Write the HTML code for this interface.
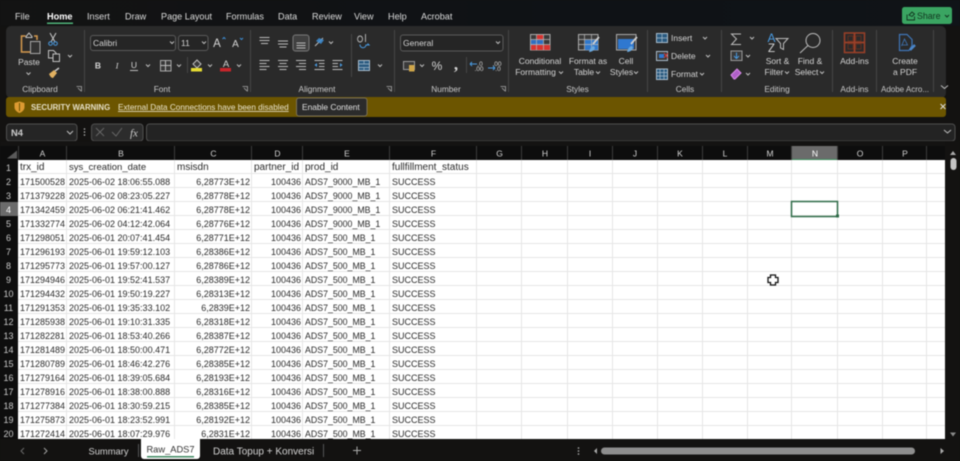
<!DOCTYPE html>
<html><head><meta charset="utf-8"><style>
html,body{margin:0;padding:0;width:960px;height:461px;overflow:hidden;background:#131211}
body{position:relative;font-family:"Liberation Sans",sans-serif}
#wrap{position:absolute;left:0;top:0;width:960px;height:461px;filter:blur(.4px)}
svg{position:absolute;left:0;top:0}
svg text{font-family:"Liberation Sans",sans-serif;font-size:8.5px;fill:#d4d4d4}
.m{text-anchor:middle}
.l{fill:#c8c8c8;font-size:8.3px}
.t{font-size:9.1px;fill:#dcdcdc}
.c{fill:none;stroke:#bdbdbd;stroke-width:1}
.s{fill:none;stroke:#bcbcbc;stroke-width:1}
.b{fill:none;stroke:#3f8fd6;stroke-width:1}
#grid{position:absolute;left:0;top:160px;width:945px;height:279px;overflow:hidden;background:#fff}
table{position:absolute;left:0;top:0;border-collapse:collapse;table-layout:fixed;width:477px;font-size:9px;color:#2a2a2a}
td{height:14px;padding:2px 2px 0;box-sizing:border-box;white-space:nowrap;overflow:hidden;line-height:12px}
td:first-child{background:#0e0e0e;color:#c9c9c9;text-align:center;padding:2px 1px 0 0;font-size:9px}
td.r{text-align:right}
td.e{font-size:8.8px}
tr.h td{font-size:10px}
tr.h td:first-child{font-size:9px}
tr.h td.ss{font-size:9.5px}
tr.sel td:first-child{background:#6b6b6b;color:#fff}
</style></head><body><div id="wrap">
<div id="grid">
<svg width="945" height="279" style="left:0;top:0">
<g stroke="#e6e6e6" stroke-width="1">
<path d="M18 13.5H945M18 27.5H945M18 41.5H945M18 55.5H945M18 69.5H945M18 83.5H945M18 97.5H945M18 111.5H945M18 125.5H945M18 139.5H945M18 153.5H945M18 167.5H945M18 181.5H945M18 195.5H945M18 209.5H945M18 223.5H945M18 237.5H945M18 251.5H945M18 265.5H945"/>
<path d="M66.500 0V279M174.500 0V279M251.500 0V279M302.500 0V279M389.500 0V279M476.500 0V279M521.500 0V279M567.500 0V279M612.500 0V279M657.500 0V279M702.500 0V279M747.500 0V279M791.500 0V279M837.500 0V279M882.500 0V279M926.500 0V279"/>
</g>
<rect x="791.500" y="41.500" width="46" height="15" fill="none" stroke="#2e6b47" stroke-width="1.500"/>
<rect x="836" y="54.500" width="3" height="3" fill="#2e6b47"/>
<path d="M770.500 115h5v2.500h2.500v5h-2.500v2.500h-5v-2.500h-2.500v-5h2.500z" fill="#fff" stroke="#111" stroke-width="1.300"/>
</svg>
<table>
<colgroup><col style="width:18px"><col style="width:49px"><col style="width:108px"><col style="width:77px"><col style="width:51px"><col style="width:87px"><col style="width:87px"></colgroup>
<tr class="h"><td>1</td><td>trx_id</td><td class="ss">sys_creation_date</td><td>msisdn</td><td>partner_id</td><td>prod_id</td><td>fullfillment_status</td></tr>
<tr><td>2</td><td class="r">171500528</td><td>2025-06-02 18:06:55.088</td><td class="r">6,28773E+12</td><td class="r">100436</td><td class="e">ADS7_9000_MB_1</td><td>SUCCESS</td></tr>
<tr><td>3</td><td class="r">171379228</td><td>2025-06-02 08:23:05.227</td><td class="r">6,28778E+12</td><td class="r">100436</td><td class="e">ADS7_9000_MB_1</td><td>SUCCESS</td></tr>
<tr class="sel"><td>4</td><td class="r">171342459</td><td>2025-06-02 06:21:41.462</td><td class="r">6,28778E+12</td><td class="r">100436</td><td class="e">ADS7_9000_MB_1</td><td>SUCCESS</td></tr>
<tr><td>5</td><td class="r">171332774</td><td>2025-06-02 04:12:42.064</td><td class="r">6,28776E+12</td><td class="r">100436</td><td class="e">ADS7_9000_MB_1</td><td>SUCCESS</td></tr>
<tr><td>6</td><td class="r">171298051</td><td>2025-06-01 20:07:41.454</td><td class="r">6,28771E+12</td><td class="r">100436</td><td class="e">ADS7_500_MB_1</td><td>SUCCESS</td></tr>
<tr><td>7</td><td class="r">171296193</td><td>2025-06-01 19:59:12.103</td><td class="r">6,28386E+12</td><td class="r">100436</td><td class="e">ADS7_500_MB_1</td><td>SUCCESS</td></tr>
<tr><td>8</td><td class="r">171295773</td><td>2025-06-01 19:57:00.127</td><td class="r">6,28786E+12</td><td class="r">100436</td><td class="e">ADS7_500_MB_1</td><td>SUCCESS</td></tr>
<tr><td>9</td><td class="r">171294946</td><td>2025-06-01 19:52:41.537</td><td class="r">6,28389E+12</td><td class="r">100436</td><td class="e">ADS7_500_MB_1</td><td>SUCCESS</td></tr>
<tr><td>10</td><td class="r">171294432</td><td>2025-06-01 19:50:19.227</td><td class="r">6,28313E+12</td><td class="r">100436</td><td class="e">ADS7_500_MB_1</td><td>SUCCESS</td></tr>
<tr><td>11</td><td class="r">171291353</td><td>2025-06-01 19:35:33.102</td><td class="r">6,2839E+12</td><td class="r">100436</td><td class="e">ADS7_500_MB_1</td><td>SUCCESS</td></tr>
<tr><td>12</td><td class="r">171285938</td><td>2025-06-01 19:10:31.335</td><td class="r">6,28318E+12</td><td class="r">100436</td><td class="e">ADS7_500_MB_1</td><td>SUCCESS</td></tr>
<tr><td>13</td><td class="r">171282281</td><td>2025-06-01 18:53:40.266</td><td class="r">6,28387E+12</td><td class="r">100436</td><td class="e">ADS7_500_MB_1</td><td>SUCCESS</td></tr>
<tr><td>14</td><td class="r">171281489</td><td>2025-06-01 18:50:00.471</td><td class="r">6,28772E+12</td><td class="r">100436</td><td class="e">ADS7_500_MB_1</td><td>SUCCESS</td></tr>
<tr><td>15</td><td class="r">171280789</td><td>2025-06-01 18:46:42.276</td><td class="r">6,28385E+12</td><td class="r">100436</td><td class="e">ADS7_500_MB_1</td><td>SUCCESS</td></tr>
<tr><td>16</td><td class="r">171279164</td><td>2025-06-01 18:39:05.684</td><td class="r">6,28193E+12</td><td class="r">100436</td><td class="e">ADS7_500_MB_1</td><td>SUCCESS</td></tr>
<tr><td>17</td><td class="r">171278916</td><td>2025-06-01 18:38:00.888</td><td class="r">6,28316E+12</td><td class="r">100436</td><td class="e">ADS7_500_MB_1</td><td>SUCCESS</td></tr>
<tr><td>18</td><td class="r">171277384</td><td>2025-06-01 18:30:59.215</td><td class="r">6,28385E+12</td><td class="r">100436</td><td class="e">ADS7_500_MB_1</td><td>SUCCESS</td></tr>
<tr><td>19</td><td class="r">171275873</td><td>2025-06-01 18:23:52.991</td><td class="r">6,28192E+12</td><td class="r">100436</td><td class="e">ADS7_500_MB_1</td><td>SUCCESS</td></tr>
<tr><td>20</td><td class="r">171272414</td><td>2025-06-01 18:07:29.976</td><td class="r">6,2831E+12</td><td class="r">100436</td><td class="e">ADS7_500_MB_1</td><td>SUCCESS</td></tr>
</table>
</div>
<svg width="960" height="461" viewBox="0 0 960 461" style="pointer-events:none">
<defs><linearGradient id="top" x1="0" x2="1" y1="0" y2="0"><stop offset="0" stop-color="#131313"/><stop offset=".6" stop-color="#0f1216"/><stop offset="1" stop-color="#101418"/></linearGradient></defs>
<rect width="960" height="26" fill="url(#top)"/>
<!-- tabs -->
<g class="tabs">
<text x="15" y="19.500" class="t">File</text>
<text x="47" y="19.500" class="t" style="fill:#fff;font-weight:bold;font-size:9.200px">Home</text>
<rect x="47" y="22.500" width="26" height="1.500" fill="#4fb37a"/>
<text x="87" y="19.500" class="t">Insert</text>
<text x="125" y="19.500" class="t">Draw</text>
<text x="161" y="19.500" class="t">Page Layout</text>
<text x="226" y="19.500" class="t">Formulas</text>
<text x="278" y="19.500" class="t">Data</text>
<text x="312" y="19.500" class="t">Review</text>
<text x="354" y="19.500" class="t">View</text>
<text x="388" y="19.500" class="t">Help</text>
<text x="421" y="19.500" class="t">Acrobat</text>
</g>
<!-- share -->
<rect x="902" y="7" width="50" height="17" rx="2.500" fill="#3aa562"/>
<path d="M907 14.500v5.500h7.500v-3.500M909 15l3-3 2.500 2-2.500 2.500z" fill="none" stroke="#12351f" stroke-width=".9"/>
<text x="917" y="19" style="fill:#12351f;font-size:8.800px">Share</text>
<path d="M945 15l2 2 2-2" fill="none" stroke="#12351f"/>
<!-- ribbon -->
<rect x="6" y="26" width="940" height="72" rx="5" fill="#2a2a2a"/>
<g stroke="#454545" stroke-width="1">
<path d="M84.500 30V92M250.500 30V92M394.500 30V92M508.500 30V92M647.500 30V92M721.500 30V92M832.500 30V92M876.500 30V92M933.500 30V92"/>
<path d="M351.500 34V77M466.500 57V73M187.500 57V73"/>
</g>
<!-- clipboard -->
<path d="M25.500 36h-4v16h9" fill="none" stroke="#d69a4e" stroke-width="1.500"/><path d="M34 36h3v4" fill="none" stroke="#d69a4e" stroke-width="1.500"/>
<path d="M26 36.500l3-3.500 3 3.500v1h-6z" fill="#2a2a2a" stroke="#c8c8c8"/>
<rect x="30.500" y="41.500" width="9.500" height="12" fill="#333" stroke="#a8a8a8"/>
<text x="29" y="65" class="m">Paste</text>
<path d="M26.500 72.500l2 2 2-2" class="c"/>
<path d="M50 33l5 9M56 33l-5 9" stroke="#c8c8c8" fill="none"/><circle cx="50.500" cy="43.500" r="1.800" fill="#2a2a2a" stroke="#4a9ae0"/><circle cx="55.500" cy="43.500" r="1.800" fill="#2a2a2a" stroke="#4a9ae0"/>
<path d="M48.500 50.500h5l2.500 2.500v1h-3v4h-4.500z" fill="none" stroke="#c0c0c0"/><rect x="53" y="54" width="6.500" height="7.500" fill="#2a2a2a" stroke="#c0c0c0"/>
<path d="M68 55l2 2 2-2" class="c"/>
<path d="M49 74l5-4 3 3-4 5c-2 0-3-2-4-4z" fill="#e0b060"/><path d="M55 71l4-3" stroke="#c8c8c8" stroke-width="1.500"/>
<text x="40" y="92" class="m l">Clipboard</text>
<path d="M76.500 86.500h5v5M78 88l3 3" fill="none" stroke="#aaa" stroke-width=".8"/>
<!-- font -->
<rect x="90.500" y="35.500" width="85" height="15" rx="2.500" fill="#252525" stroke="#5a5a5a"/>
<text x="93" y="46">Calibri</text><path d="M170 41.500l2 2 2-2" class="c"/>
<rect x="178.500" y="35.500" width="29.500" height="15" rx="2.500" fill="#252525" stroke="#5a5a5a"/>
<text x="181" y="46">11</text><path d="M202 41.500l2 2 2-2" class="c"/>
<text x="217" y="47" class="m" style="font-size:11.500px">A</text><path d="M222.500 39l1.500-1.500 1.500 1.500" class="b"/>
<text x="235.500" y="47" class="m" style="font-size:10px">A</text><path d="M240 38l1.500 1.500 1.500-1.500" class="b"/>
<text x="98" y="68.500" class="m" style="font-weight:bold">B</text>
<text x="117" y="68.500" class="m" style="font-style:italic;font-family:'Liberation Serif',serif">I</text>
<text x="134" y="68" class="m">U</text><path d="M130 70.500h8" class="s"/>
<path d="M146 64.500l2 2 2-2" class="c"/>
<rect x="160.500" y="60.500" width="10.500" height="10.500" fill="#383838" stroke="#a8a8a8"/><path d="M165.500 60.500v10.500M160.500 65.500h10.500" class="s"/>
<path d="M177 64.500l2 2 2-2" class="c"/>
<path d="M193 64l4-4 4 4-3.500 3.500h-1z" fill="#3a3a3a" stroke="#c0c0c0"/>
<rect x="191" y="68" width="11" height="3.500" fill="#e6dc32"/>
<path d="M208 64.500l2 2 2-2" class="c"/>
<text x="226" y="67" class="m" style="font-size:9.500px">A</text><rect x="220" y="68" width="11" height="3.500" fill="#c9252b"/>
<path d="M237 64.500l2 2 2-2" class="c"/>
<text x="162" y="92" class="m l">Font</text>
<path d="M242.500 86.500h5v5M244 88l3 3" fill="none" stroke="#aaa" stroke-width=".8"/>
<!-- alignment -->
<path d="M259.500 37.500h10M259.500 40.500h10M261 43.500h7" class="s"/>
<path d="M278 41h10M278 44h10M279.500 47h7" class="s"/>
<rect x="293" y="35" width="16" height="16" rx="2.500" fill="#404040" stroke="#7a7a7a"/>
<path d="M296.500 43h9M296.500 45.500h9M296.500 48h9" class="s"/>
<path d="M315 46l8-8" stroke="#bcbcbc"/><path d="M316 41l3-3 5 2-3 4z" fill="#3f8fd6" opacity=".85"/>
<path d="M329 41.500l2 2 2-2" class="c"/>
<path d="M259.500 60.500h10M259.500 63.500h7M259.500 66.500h10M259.500 69.500h7" class="s"/>
<path d="M278 60.500h10M279.500 63.500h7M278 66.500h10M279.500 69.500h7" class="s"/>
<path d="M296 60.500h10M299 63.500h7M296 66.500h10M299 69.500h7" class="s"/>
<path d="M314.500 60.500h10M319 63.500h5.500M319 66.500h5.500M314.500 69.500h10" class="s"/><path d="M317 63l-2.500 2 2.500 2z" fill="#4a9ae0"/>
<path d="M332.500 60.500h10M332.500 63.500h5.500M332.500 66.500h5.500M332.500 69.500h10" class="s"/><path d="M340 63l2.500 2-2.500 2z" fill="#4a9ae0"/>
<path d="M360 36a2.500 3 0 1 0 .1 0M365.500 34v8" stroke="#bbb" fill="none" stroke-width=".9"/><path d="M360 44.500a3 3 0 0 0 6 .5h3l-1.500-1.500" fill="none" stroke="#4a9ae0"/>
<rect x="358.500" y="60.500" width="11" height="10" fill="#2a5a80" stroke="#a8bccc"/><path d="M358.500 64h11M358.500 67.500h11M364 60.500v3M364 67.500v3" stroke="#a8bccc" fill="none" stroke-width=".7"/>
<path d="M378 64.500l2 2 2-2" class="c"/>
<text x="317" y="92" class="m l">Alignment</text>
<path d="M386.500 86.500h5v5M388 88l3 3" fill="none" stroke="#aaa" stroke-width=".8"/>
<!-- number -->
<rect x="400.500" y="35" width="102.500" height="16" rx="2.500" fill="#252525" stroke="#5a5a5a"/>
<text x="403" y="46">General</text><path d="M496 41.500l2 2 2-2" class="c"/>
<rect x="403.500" y="61.500" width="11" height="8" fill="#3a3a3a" stroke="#9a9a9a"/><rect x="409" y="65" width="5.500" height="6.500" fill="#cfa64a"/>
<path d="M420 64.500l2 2 2-2" class="c"/>
<text x="437" y="70" class="m" style="font-size:12px">%</text>
<text x="456" y="69.500" class="m" style="font-size:17px;font-weight:bold;font-family:'Liberation Serif',serif">,</text>
<path d="M470 64h7M470 64l2-2M470 64l2 2" stroke="#4a9ae0" fill="none"/><text x="480" y="66" style="font-size:6.500px" class="m">.0</text><text x="479" y="71" style="font-size:6.500px" class="m">.00</text>
<path d="M488 68h7M495 68l-2-2M495 68l-2 2" stroke="#4a9ae0" fill="none"/><text x="497" y="66" style="font-size:6.500px" class="m">.00</text><text x="498" y="71" style="font-size:6.500px" class="m">.0</text>
<text x="446" y="92" class="m l">Number</text>
<path d="M500.500 86.500h5v5M502 88l3 3" fill="none" stroke="#aaa" stroke-width=".8"/>
<!-- styles -->
<rect x="530.500" y="34.500" width="19.500" height="15.500" fill="#3a3a3a" stroke="#aaa"/>
<rect x="537" y="35" width="6.500" height="5" fill="#d8332f"/><rect x="531" y="40" width="6" height="5" fill="#2f6fc2"/><rect x="537" y="40" width="6.500" height="5" fill="#2f6fc2"/><rect x="537" y="45" width="6.500" height="5" fill="#d8332f"/><rect x="531" y="45" width="6" height="5" fill="#d8332f"/><rect x="543.500" y="45" width="6.500" height="5" fill="#d8332f"/>
<path d="M536.500 34.500v15.500M543.500 34.500v15.500M530.500 39.500h19.500M530.500 44.500h19.500" stroke="#bbb" stroke-width=".7" fill="none"/>
<text x="540" y="64" class="m">Conditional</text><text x="535.500" y="75" class="m">Formatting</text><path d="M559 71.500l2 2 2-2" class="c"/>
<rect x="578.500" y="34.500" width="19.500" height="15.500" fill="#3a3a3a" stroke="#aaa"/><rect x="585" y="40" width="13" height="10" fill="#3078cc"/>
<path d="M584.500 34.500v15.500M591.500 34.500v15.500M578.500 39.500h19.500M578.500 44.500h19.500" stroke="#bbb" stroke-width=".7" fill="none"/>
<path d="M593 44l6-7" stroke="#d0d0d0" stroke-width="1.800"/><path d="M589 52c1-4 3-6 5-6l1 2c-1 3-4 4-6 4z" fill="#6aa8de"/>
<text x="588" y="64" class="m">Format as</text><text x="584" y="75" class="m">Table</text><path d="M596 71.500l2 2 2-2" class="c"/>
<rect x="616.500" y="34.500" width="19.500" height="15.500" fill="#3a3a3a" stroke="#aaa"/><rect x="618" y="39" width="16" height="10" fill="#2f78d0"/>
<path d="M631 44l6-7" stroke="#d0d0d0" stroke-width="1.800"/><path d="M627 52c1-4 3-6 5-6l1 2c-1 3-4 4-6 4z" fill="#6aa8de"/>
<text x="626" y="64" class="m">Cell</text><text x="621.500" y="75" class="m">Styles</text><path d="M634 71.500l2 2 2-2" class="c"/>
<text x="577.500" y="92" class="m l">Styles</text>
<!-- cells -->
<rect x="656.500" y="33.500" width="11" height="9" fill="#2a5a80" stroke="#a8bccc"/><path d="M656.500 38h11M662 33.500v9" stroke="#a8bccc" stroke-width=".7"/>
<text x="671" y="41">Insert</text><path d="M703 37l2 2 2-2" class="c"/>
<rect x="656.500" y="51.500" width="11" height="9" fill="#3a3a3a" stroke="#a8bccc"/><rect x="659" y="54" width="5" height="4" fill="#2f78d0"/><path d="M664 53l4 5M668 53l-4 5" stroke="#d8393a"/>
<text x="671" y="59">Delete</text><path d="M706 55l2 2 2-2" class="c"/>
<rect x="656.500" y="69" width="11" height="10.500" fill="#2a5a80" stroke="#a8bccc"/><path d="M656.500 72.500h11M656.500 76h11M660 69v10.500M664 69v10.500" stroke="#a8bccc" stroke-width=".7"/>
<text x="671" y="77">Format</text><path d="M700 73l2 2 2-2" class="c"/>
<text x="685" y="92" class="m l">Cells</text>
<!-- editing -->
<path d="M741 34h-9.500l5 5-5 5.500h9.500" class="s"/><path d="M750 37l2 2 2-2" class="c"/>
<rect x="731" y="51" width="11" height="9.500" fill="#3a3a3a" stroke="#9a9a9a"/><path d="M736.500 52.500v5.500M734 56l2.500 2.500 2.500-2.500" fill="none" stroke="#4a9ae0"/><path d="M746 55l2 2 2-2" class="c"/>
<path d="M731 75l6-6 4 4-6 6h-1z" fill="#b060c8" stroke="#d88ae8"/><path d="M746 73l2 2 2-2" class="c"/>
<text x="771.500" y="42" class="m" style="font-size:12px;fill:#4a9ae0">A</text>
<text x="771.500" y="52" class="m" style="font-size:11.500px">Z</text>
<path d="M776 38.500h12l-4.500 5v6l-3-1.500v-4.500z" class="s"/>
<text x="777.500" y="64" class="m">Sort &amp;</text><text x="774" y="75" class="m">Filter</text><path d="M785 71.500l2 2 2-2" class="c"/>
<circle cx="813" cy="40.500" r="7" class="s"/><path d="M808 45.500l-8 7.500" class="s"/>
<text x="810" y="64" class="m">Find &amp;</text><text x="806.500" y="75" class="m">Select</text><path d="M820 71.500l2 2 2-2" class="c"/>
<text x="777" y="92" class="m l">Editing</text>
<!-- addins -->
<rect x="844.500" y="33" width="20" height="19.500" fill="none" stroke="#9c4028" stroke-width="1.500"/>
<path d="M854.500 33v19.500M844.500 42.500h20" stroke="#9c4028" stroke-width="1.800"/>
<rect x="848" y="36" width="5" height="5" fill="none" stroke="#5c2e20"/><rect x="856" y="36" width="5" height="5" fill="none" stroke="#5c2e20"/><rect x="848" y="44" width="5" height="5" fill="none" stroke="#5c2e20"/><rect x="856" y="44" width="5" height="5" fill="none" stroke="#5c2e20"/>
<text x="854.500" y="64" class="m">Add-ins</text>
<text x="854.500" y="92" class="m l">Add-ins</text>
<!-- pdf -->
<path d="M899.500 34.500h7.500l5 5v6l-3 5h-9.500z" fill="none" stroke="#3f76b8" stroke-width="1.200"/><path d="M901.500 46l3-7 3 6-6 0" fill="none" stroke="#3f76b8" stroke-width=".8"/>
<path d="M910 50l5-5" stroke="#4a86c8" stroke-width="2.500"/>
<text x="905" y="64" class="m">Create</text><text x="905" y="75" class="m">a PDF</text>
<text x="905" y="92" class="m l" style="font-size:8px">Adobe Acro...</text>
<path d="M941 85.500l3.500 3 3.500-3" class="c" stroke-width="1.200"/>
<!-- warning -->
<rect x="6" y="97" width="940" height="20" rx="3" fill="#6c5500"/>
<path d="M19.500 101.500l5 1.500v4c0 3-2.500 5-5 6-2.500-1-5-3-5-6v-4z" fill="#dd9b32"/><path d="M19.500 103v8" stroke="#6c5500" stroke-width="1"/>
<text x="31" y="110" style="font-weight:bold;font-size:7.800px;fill:#e6e0c8">SECURITY WARNING</text>
<text x="118" y="110" style="font-size:8.200px;fill:#ece6cc;text-decoration:underline">External Data Connections have been disabled</text>
<rect x="296.500" y="98" width="70.500" height="18" rx="2.500" fill="#2b2b2b" stroke="#7a7158"/>
<text x="302" y="110" style="font-size:8.400px;fill:#e0e0e0">Enable Content</text>
<path d="M940.500 104l5 5M945.500 104l-5 5" stroke="#ddd" stroke-width="1"/>
<!-- formula bar -->
<rect x="6.500" y="124" width="70.500" height="17" rx="3" fill="#252525" stroke="#505050"/>
<text x="11" y="136" style="font-size:9.400px;font-weight:bold;fill:#ccc">N4</text>
<path d="M67 131l3 3 3-3" class="c"/>
<circle cx="84.500" cy="129" r=".8" fill="#bbb"/><circle cx="84.500" cy="132" r=".8" fill="#bbb"/><circle cx="84.500" cy="135" r=".8" fill="#bbb"/>
<rect x="91.500" y="124" width="51.500" height="17" rx="3" fill="#2c2c2c" stroke="#505050"/>
<path d="M96 128l8 8M104 128l-8 8" stroke="#666" fill="none"/><path d="M112 132l4 4 6-8" stroke="#666" fill="none"/>
<text x="130" y="136.500" style="font-family:'Liberation Serif',serif;font-style:italic;font-size:11px;fill:#ccc">fx</text>
<rect x="146.500" y="124" width="808.500" height="17" rx="3" fill="#232323" stroke="#505050"/>
<path d="M944 130l3.500 3 3.500-3" class="c"/>
<!-- column header -->
<rect x="0" y="141" width="960" height="5" fill="#141312"/>
<rect x="0" y="146" width="945" height="14" fill="#0d0d0d"/>
<rect x="945" y="141" width="15" height="298" fill="#131211"/>
<path d="M7 158.500l10-8v8z" fill="#5a5a5a"/>
<rect x="792" y="146" width="46" height="14" fill="#6b6b6b"/><rect x="792" y="159" width="46" height="1" fill="#3a8a5a"/>
<g stroke="#3c3c3c"><path d="M18.500 146v14M66.500 146v14M174.500 146v14M251.500 146v14M302.500 146v14M389.500 146v14M476.500 146v14M521.500 146v14M567.500 146v14M612.500 146v14M657.500 146v14M702.500 146v14M747.500 146v14M791.500 146v14M837.500 146v14M882.500 146v14M926.500 146v14"/></g>
<g class="hd">
<text x="42.500" y="156.500" class="m">A</text><text x="121" y="156.500" class="m">B</text><text x="213.500" y="156.500" class="m">C</text><text x="277.500" y="156.500" class="m">D</text><text x="347" y="156.500" class="m">E</text><text x="433.500" y="156.500" class="m">F</text><text x="499.500" y="156.500" class="m">G</text><text x="545" y="156.500" class="m">H</text><text x="590" y="156.500" class="m">I</text><text x="635" y="156.500" class="m">J</text><text x="680" y="156.500" class="m">K</text><text x="725" y="156.500" class="m">L</text><text x="770" y="156.500" class="m">M</text><text x="815" y="156.500" class="m" style="fill:#fff">N</text><text x="860" y="156.500" class="m">O</text><text x="905" y="156.500" class="m">P</text>
</g>
<!-- v scroll -->
<path d="M950 155l3-4 3 4z" fill="#aaa"/><rect x="950.500" y="158" width="6" height="12" rx="3" fill="#c4c4c4"/>
<path d="M950 432.500l3 4 3-4z" fill="#8a8a8a"/>
<!-- bottom -->
<rect x="0" y="439" width="960" height="22" fill="#131211"/>
<path d="M24 448l-3 3 3 3" fill="none" stroke="#6a6a6a"/><path d="M44 448l3 3-3 3" fill="none" stroke="#a0a0a0"/>
<text x="108.500" y="454.500" class="m" style="font-size:9.400px;fill:#d4d4d4">Summary</text>
<path d="M138.500 444v13" stroke="#555"/>
<path d="M141 439h59v17a3 3 0 0 1-3 3h-53a3 3 0 0 1-3-3z" fill="#fff"/>
<text x="170.500" y="452.500" class="m" style="font-size:9.300px;fill:#333">Raw_ADS7</text>
<rect x="147" y="456" width="47" height="1.500" fill="#3f8a62"/>
<text x="213" y="454.500" style="font-size:10px;fill:#d4d4d4">Data Topup + Konversi</text>
<path d="M323.500 444v13" stroke="#555"/>
<path d="M353 450.500h8M357 446.500v8" stroke="#aaa"/>
<circle cx="578.500" cy="448" r=".8" fill="#bbb"/><circle cx="578.500" cy="451" r=".8" fill="#bbb"/><circle cx="578.500" cy="454" r=".8" fill="#bbb"/>
<path d="M597 448l-3 3 3 3z" fill="#aaa"/>
<rect x="601" y="447.500" width="314" height="7" rx="3.500" fill="#8e8e8e"/>
<path d="M940.500 448l3.500 3-3.500 3z" fill="#aaa"/>
</svg>
</div></body></html>
